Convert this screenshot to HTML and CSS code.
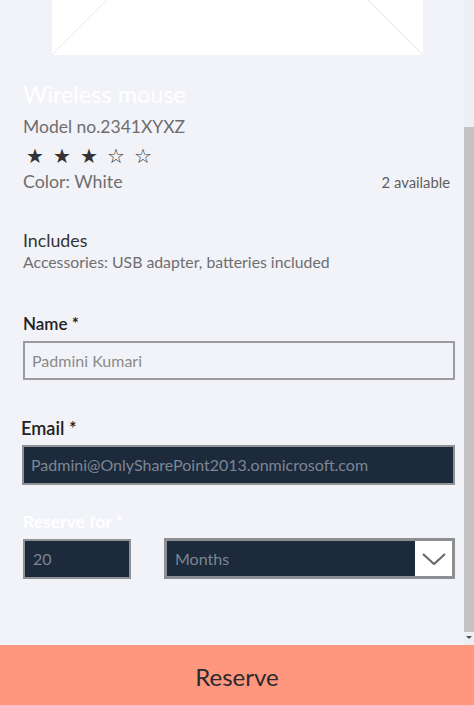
FILE: index.html
```html
<!DOCTYPE html>
<html>
<head>
<meta charset="utf-8">
<link rel="stylesheet" href="styles.css">
</head>
<body>
<div class="app">
  <div class="page">
    <div class="content">
      <div class="hero">
        <svg class="hero-lines" width="371" height="55" viewBox="0 0 371 55">
          <line x1="0" y1="55" x2="55" y2="0" stroke="#e6e6ea" stroke-width="1"/>
          <line x1="316" y1="0" x2="371" y2="55" stroke="#e6e6ea" stroke-width="1"/>
        </svg>
      </div>
      <div class="title">Wireless mouse</div>
      <div class="model">Model no.2341XYXZ</div>
      <div class="stars"><span class="star">★</span><span class="star">★</span><span class="star">★</span><span class="star">☆</span><span class="star">☆</span></div>
      <div class="color-row">
        <span class="color">Color: White</span>
        <span class="avail">2 available</span>
      </div>
      <div class="includes">Includes</div>
      <div class="acc">Accessories: USB adapter, batteries included</div>

      <div class="label name-label">Name *</div>
      <div class="input light">Padmini Kumari</div>

      <div class="label email-label">Email *</div>
      <div class="input dark">Padmini@OnlySharePoint2013.onmicrosoft.com</div>

      <div class="label reserve-label">Reserve for *</div>
      <div class="reserve-row">
        <div class="input dark num">20</div>
        <div class="select">
          <div class="select-value">Months</div>
          <div class="select-btn">
            <svg width="24" height="12" viewBox="0 0 24 12"><polyline points="1,1 12,11 23,1" fill="none" stroke="#6a6a6a" stroke-width="2.2"/></svg>
          </div>
        </div>
      </div>
    </div>
    <div class="scrollbar">
      <div class="thumb"></div>
      <div class="arrow"></div>
    </div>
  </div>
  <div class="reserve-btn">Reserve</div>
</div>
</body>
</html>
```

FILE: styles.css
```css
* { box-sizing: border-box; }
html, body { margin: 0; padding: 0; }
body {
  width: 474px;
  height: 705px;
  overflow: hidden;
  font-family: Lato, "Open Sans", sans-serif;
  background: #f2f3f8;
}
.app { display: flex; flex-direction: column; height: 705px; }
.page { display: flex; height: 645px; }
.content {
  flex: 1;
  padding: 0 9px 0 23px;
}
.hero {
  width: 371px;
  height: 55px;
  margin-left: 29px;
  background: #ffffff;
}
.hero-lines { display: block; }
.title {
  margin-top: 25px;
  font-size: 23.5px;
  line-height: 28px;
  color: #ffffff;
}
.model {
  margin-top: 9px;
  font-size: 17.5px;
  line-height: 20px;
  color: #6e6e6e;
}
.stars {
  margin-top: 8px;
  height: 22px;
  display: flex;
  padding-left: 3px;
}
.star {
  width: 27px;
  font-family: "DejaVu Sans", sans-serif;
  font-size: 20px;
  line-height: 22px;
  color: #333333;
}
.color-row {
  margin-top: 4px;
  display: flex;
  justify-content: space-between;
  align-items: baseline;
  padding-right: 5px;
}
.color {
  font-size: 17.8px;
  line-height: 20px;
  color: #6e6e6e;
}
.avail {
  font-size: 14.8px;
  color: #5e5e5e;
}
.includes {
  margin-top: 39px;
  font-size: 17.8px;
  line-height: 20px;
  color: #333333;
}
.acc {
  margin-top: 3px;
  font-size: 15.8px;
  line-height: 18px;
  color: #6e6e6e;
}
.label {
  font-size: 17px;
  line-height: 20px;
  font-weight: 600;
  color: #222222;
}
.name-label { margin-top: 43px; }
.email-label { margin-top: 38px; margin-left: -2px; font-size: 18.2px; }
.reserve-label { margin-top: 27px; color: #ffffff; font-size: 17.5px; font-weight: 700; }
.input {
  height: 40px;
  border: 2px solid #9b9b9d;
  padding: 0 7px;
  font-size: 16px;
  line-height: 36px;
  color: #8a8a8a;
}
.light { margin-top: 7px; height: 39px; background: #f2f3f8; line-height: 35px; }
.dark {
  background: #1c2a3b;
  color: #7c8694;
  border-color: #8e9196;
}
.email-label + .input { margin-top: 7px; margin-left: -1px; }
.reserve-row {
  margin-top: 6px;
  display: flex;
  justify-content: space-between;
  align-items: flex-start;
}
.num { width: 108px; margin-top: 1px; padding-left: 8px; }
.select {
  width: 291px;
  height: 41px;
  border: 3px solid #8e8f93;
  display: flex;
  background: #1c2a3b;
}
.select-value {
  flex: 1;
  padding-left: 8px;
  font-size: 16px;
  line-height: 35px;
  color: #7c8694;
}
.select-btn {
  width: 37px;
  background: #ffffff;
  display: flex;
  align-items: center;
  justify-content: center;
}
.select-btn svg { display: block; }
.scrollbar {
  width: 10px;
  display: flex;
  flex-direction: column;
  background: #eeeff3;
}
.thumb {
  margin-top: 127px;
  height: 505px;
  background: #c2c2c4;
}
.arrow {
  margin: 4px auto 0;
  width: 0;
  height: 0;
  border-left: 3px solid transparent;
  border-right: 3px solid transparent;
  border-top: 3px solid #505050;
}
.reserve-btn {
  height: 60px;
  background: #ff977e;
  display: flex;
  align-items: center;
  justify-content: center;
  font-size: 24px;
  color: #2a2a2e;
  padding-top: 2px;
}
```
